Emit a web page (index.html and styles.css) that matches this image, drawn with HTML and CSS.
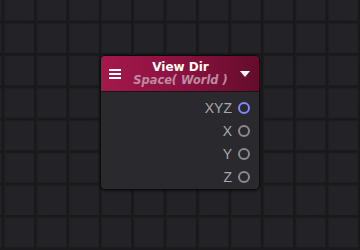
FILE: index.html
```html
<!DOCTYPE html>
<html lang="en">
<head>
    <meta charset="UTF-8">
    <title>View Dir</title>
    <link rel="stylesheet" href="styles.css">
</head>
<body>
    <div class="canvas">
        <div class="node">
            <div class="node-head">
                <svg class="menu" width="12" height="10" viewBox="0 0 12 10">
                    <rect x="0" y="0" width="12" height="2" fill="#fff"/>
                    <rect x="0" y="4" width="12" height="2" fill="#fff"/>
                    <rect x="0" y="8" width="12" height="2" fill="#fff"/>
                </svg>
                <div class="titles">
                    <div class="title">View Dir</div>
                    <div class="sub">Space( World )</div>
                </div>
                <svg class="drop" width="10" height="6" viewBox="0 0 10 6">
                    <path d="M0 0 L10 0 L5 6 Z" fill="#fff"/>
                </svg>
            </div>
            <div class="node-body">
                <div class="port">XYZ <span class="dot dot-vec"></span></div>
                <div class="port">X <span class="dot"></span></div>
                <div class="port">Y <span class="dot"></span></div>
                <div class="port">Z <span class="dot"></span></div>
            </div>
        </div>
    </div>
</body>
</html>
```

FILE: styles.css
```css
*{margin:0;padding:0;box-sizing:border-box;}
body{
    background:#222226;
    font-family:"DejaVu Sans",Verdana,sans-serif;
}
/* 网格画布 */
.canvas{
    width:360px;height:250px;position:relative;overflow:hidden;
    background-color:#232327;
    background-image:
        linear-gradient(90deg,#1a1a1c 0,#18181a 2px,#1e1e21 3px,transparent 4px),
        linear-gradient(180deg,#1a1a1c 0,#18181a 2px,#1e1e21 3px,transparent 4px);
    background-size:32.4px 32.4px;
    background-position:1.5px 20.5px;
}
/* 节点 */
.node{
    position:absolute;left:100px;top:55px;
    width:160px;height:135px;
    border:1px solid #0c0c0d;border-radius:5px;
    background:#2a2a2e;
    box-shadow:0 1px 3px rgba(0,0,0,0.5);
    overflow:hidden;
}
.node-head{
    height:36px;display:flex;align-items:center;
    padding:0 8px 0 8px;
    background:linear-gradient(90deg,#a5184c 0%,#8a1240 50%,#650c2b 100%);
    border-bottom:1px solid #161618;
}
.menu{flex:none;}
.titles{flex:1;text-align:center;line-height:13px;padding-top:1px;}
.title{color:#fff;font-weight:bold;font-size:12px;}
.sub{color:#bd8ca2;font-weight:bold;font-style:italic;font-size:11.4px;}
.drop{flex:none;margin-right:1px;margin-top:1px;}
.node-body{padding-top:4px;}
.port{
    height:23px;display:flex;align-items:center;justify-content:flex-end;
    padding-right:9px;gap:6px;
    color:#a9a9ab;font-family:"Liberation Sans",Arial,sans-serif;font-size:14px;
}
.dot{
    width:12px;height:12px;border-radius:50%;
    border:2.5px solid #8b8b8d;
}
.dot-vec{border-color:#8585ff;}
```
